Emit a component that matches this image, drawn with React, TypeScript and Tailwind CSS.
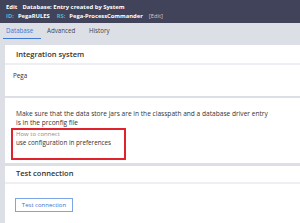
import React from 'react';

const App: React.FC = () => {
  return (
    <div
      className="w-[300px] h-[223px] overflow-hidden bg-[#dcdfe6] text-[#333]"
      style={{ fontFamily: '"Open Sans", "Liberation Sans", sans-serif' }}
    >
      {/* header */}
      <div className="h-[23px] bg-[#40435a] pl-[6px] pt-[2px]">
        <div className="flex text-[5.9px] leading-[10px] font-bold text-white">
          <span>Edit</span>
          <span className="ml-[5px]">Database: Entry created by System</span>
        </div>
        <div className="flex items-center text-[5.8px] leading-[8px] font-bold text-white">
          <span className="text-[#52b6c9]">ID:</span>
          <span className="ml-[4px]">PegaRULES</span>
          <span className="ml-[7px] text-[#52b6c9]">RS:</span>
          <span className="ml-[4px]">Pega-ProcessCommander</span>
          <span className="ml-[6px] font-normal text-[#c9ccd8]">[Edit]</span>
        </div>
      </div>

      {/* tabs */}
      <div className="flex h-[17px] pl-[3px] text-[6.2px] leading-[8px]">
        <div className="w-[38px] h-[16px] border-b border-[#3b78d8] pl-[3px] pt-[4px] text-[#3b78d8]">
          Database
        </div>
        <div className="ml-[3px] w-[42px] pl-[3px] pt-[4px] text-[#444]">Advanced</div>
        <div className="pl-[3px] pt-[4px] text-[#444]">History</div>
      </div>

      {/* content */}
      <div className="flex flex-col pl-[5px] pt-[5px]">
        <div className="bg-white">
          <div className="h-[20px] border-b-2 border-[#eeeff3] pl-[11px] pt-[4px] text-[7.5px] leading-[10px] font-semibold">
            Integration system
          </div>
          <div className="h-[31px] pl-[8px] pt-[7px] text-[6.3px] leading-[8px]">Pega</div>
        </div>

        <div className="mt-[2px] h-[65px] bg-white pl-[6px] pt-[11px]">
          <div className="w-[257px] pl-[5px] text-[6.6px] leading-[9px]">
            Make sure that the data store jars are in the classpath and a database driver entry is in the prconfig file
          </div>
          <div className="mt-[1px] h-[32px] w-[115px] border-2 border-[#e0222c] pl-[3px]">
            <div className="text-[6px] leading-[8px] text-[#8a8a8a]">How to connect</div>
            <div className="text-[6.3px] leading-[9px]">use configuration in preferences</div>
          </div>
        </div>

        <div className="mt-[3px] flex-1 bg-white">
          <div className="h-[18px] border-b-2 border-[#eeeff3] pl-[11px] pt-[2px] text-[7.5px] leading-[10px] font-semibold">
            Test connection
          </div>
          <div className="pl-[10px] pt-[14px] pb-[12px]">
            <div className="flex h-[14px] w-[58px] items-center justify-center border border-[#7ea4e8] text-[6px] text-[#3b6fd1]">
              Test connection
            </div>
          </div>
        </div>
      </div>
    </div>
  );
};

export default App;
